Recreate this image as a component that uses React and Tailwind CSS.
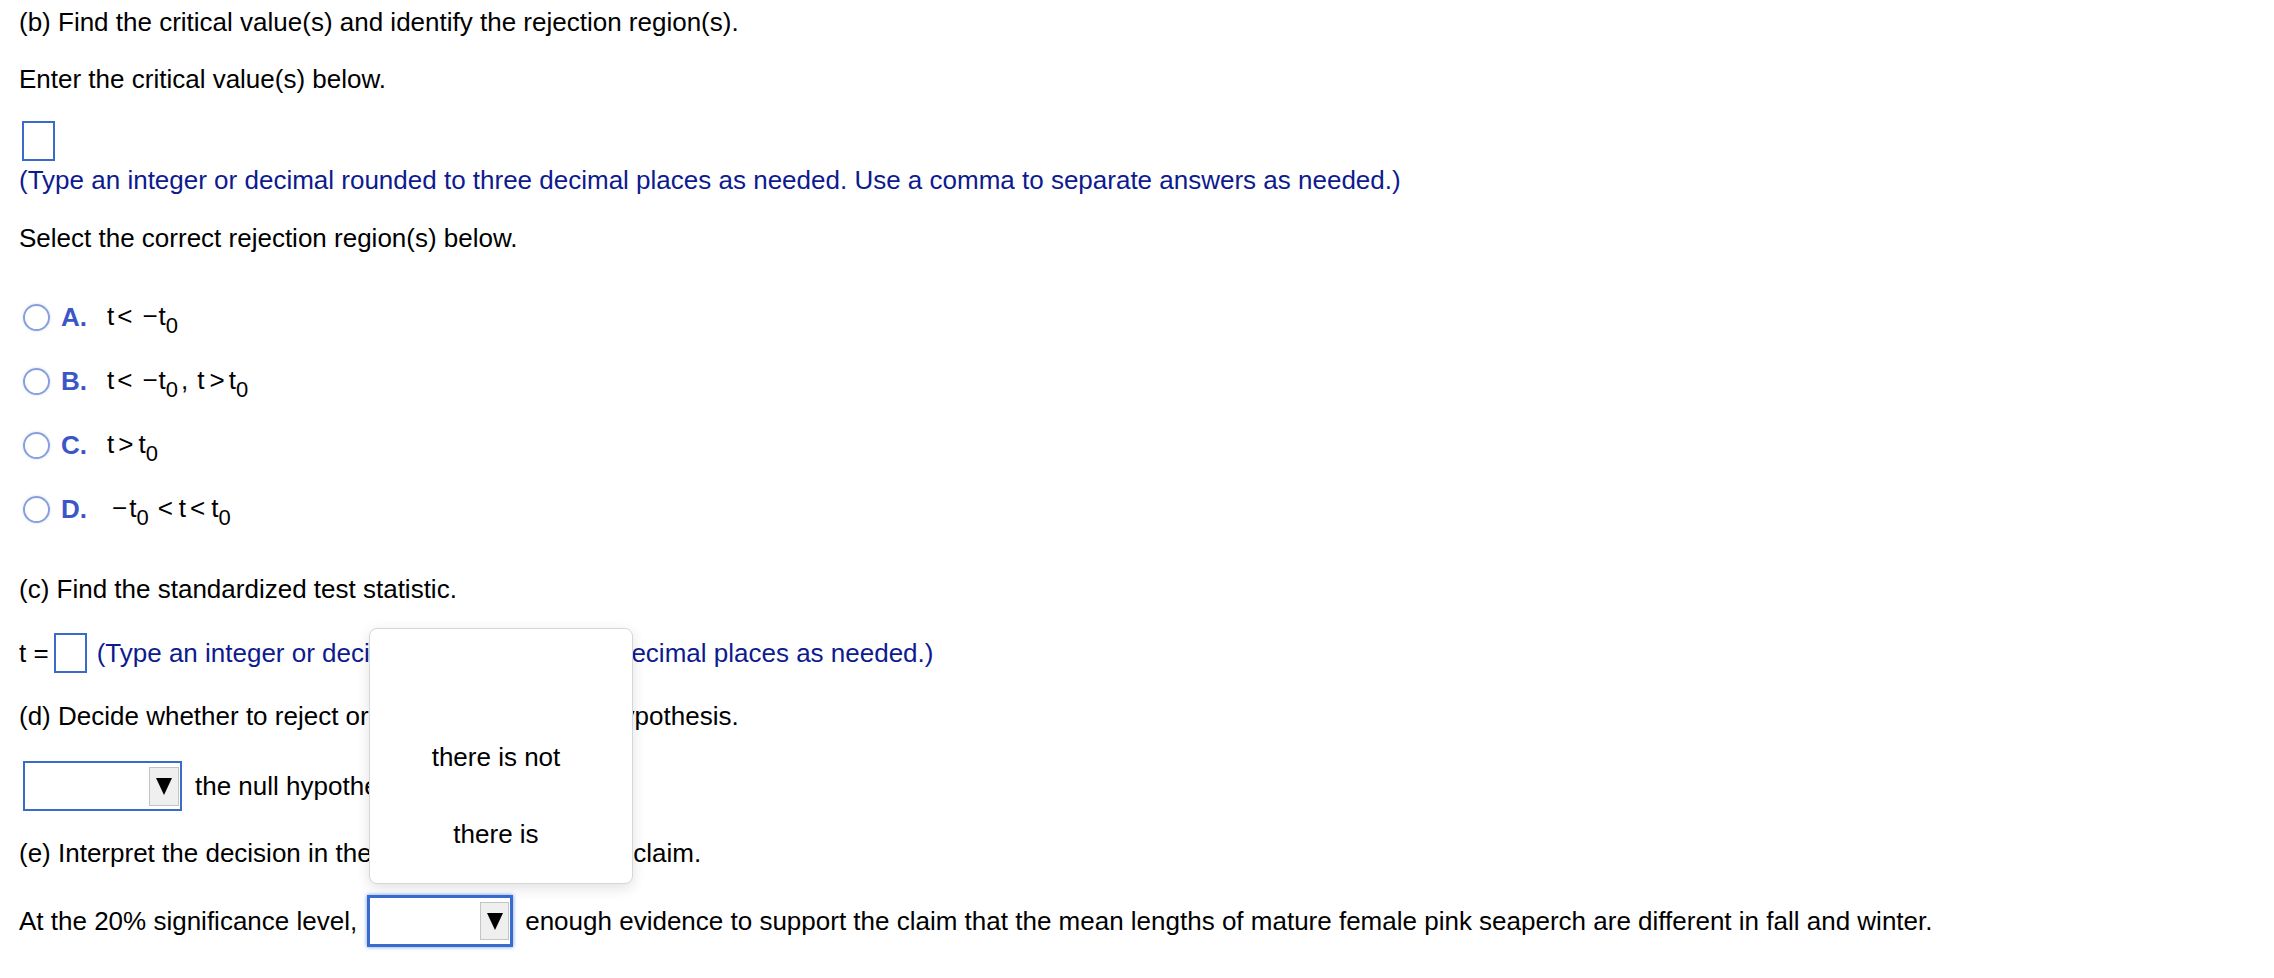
import React from 'react';

function Sub({ children }) {
  return <span className="relative top-[8px] text-[22px]">{children}</span>;
}

function Arrow({ className }) {
  return (
    <div className={className}>
      <svg width="16" height="17" viewBox="0 0 16 17">
        <polygon points="0,0 16,0 8,17" fill="#000" />
      </svg>
    </div>
  );
}

function Choice({ letter, first, children }) {
  return (
    <div className={`${first ? 'mt-[46px]' : 'mt-[28px]'} flex h-[36px] items-center`}>
      <span className="ml-[4px] h-[27px] w-[27px] rounded-full border-2 border-[#86a0dd] shadow-[0_0_3px_#cfdaf3]" />
      <span className="ml-[11px] w-[46px] font-bold text-[#3c56c8]">{letter}</span>
      <span className="flex items-baseline">{children}</span>
    </div>
  );
}

export default function App() {
  return (
    <div className="relative min-h-[978px] w-[2274px] bg-white pl-[19px] pt-[7px] font-['Liberation_Sans',Arial,sans-serif] text-[26px] leading-[30px] text-black">
      {/* part b */}
      <p>(b) Find the critical value(s) and identify the rejection region(s).</p>
      <p className="mt-[27px]">Enter the critical value(s) below.</p>
      <div className="ml-[3px] mt-[27px] h-[40px] w-[33px] border-2 border-[#3a6bc8]" />
      <p className="mt-[4px] text-[#0d1b8f]">
        (Type an integer or decimal rounded to three decimal places as needed. Use a comma to separate answers as needed.)
      </p>
      <p className="mt-[28px]">Select the correct rejection region(s) below.</p>

      <Choice letter="A." first>
        <span>t</span>
        <span className="ml-[3px]">&lt;</span>
        <span className="ml-[10px]">−</span>
        <span className="ml-[1px]">t</span>
        <Sub>0</Sub>
      </Choice>
      <Choice letter="B.">
        <span>t</span>
        <span className="ml-[3px]">&lt;</span>
        <span className="ml-[10px]">−</span>
        <span className="ml-[1px]">t</span>
        <Sub>0</Sub>
        <span className="ml-[3px]">,</span>
        <span className="ml-[9px]">t</span>
        <span className="ml-[5px]">&gt;</span>
        <span className="ml-[4px]">t</span>
        <Sub>0</Sub>
      </Choice>
      <Choice letter="C.">
        <span>t</span>
        <span className="ml-[4px]">&gt;</span>
        <span className="ml-[5px]">t</span>
        <Sub>0</Sub>
      </Choice>
      <Choice letter="D.">
        <span className="ml-[5px]">−</span>
        <span className="ml-[2px]">t</span>
        <Sub>0</Sub>
        <span className="ml-[9px]">&lt;</span>
        <span className="ml-[6px]">t</span>
        <span className="ml-[4px]">&lt;</span>
        <span className="ml-[6px]">t</span>
        <Sub>0</Sub>
      </Choice>

      {/* part c */}
      <p className="mt-[47px]">(c) Find the standardized test statistic.</p>
      <div className="mt-[29px] flex h-[40px] items-center">
        <span>t =</span>
        <div className="ml-[5px] h-[40px] w-[33px] border-2 border-[#3a6bc8]" />
        <span className="ml-[10px] text-[#0d1b8f]">
          (Type an integer or decimal rounded to three decimal places as needed.)
        </span>
      </div>

      {/* part d */}
      <p className="mt-[28px]">(d) Decide whether to reject or fail to reject the null hypothesis.</p>
      <div className="mt-[30px] flex h-[50px] items-center">
        <div className="ml-[4px] flex h-[50px] w-[159px] items-center justify-end border-2 border-[#3a6bc8] bg-white pr-[1px]">
          <Arrow className="flex h-[39px] w-[30px] items-center justify-center border border-[#c4c4c4] bg-[#efefef]" />
        </div>
        <span className="ml-[13px]">the null hypothesis.</span>
      </div>

      {/* part e */}
      <p className="mt-[27px]">(e) Interpret the decision in the context of the original claim.</p>
      <div className="mt-[27px] flex h-[52px] items-center">
        <span>At the 20% significance level,</span>
        <div className="ml-[10px] flex h-[52px] w-[146px] items-center justify-end border-[3px] border-[#3a6bd0] bg-white pr-[1px] shadow-[0_0_4px_#6f97e0]">
          <Arrow className="flex h-[38px] w-[29px] items-center justify-center border border-[#c4c4c4] bg-[#efefef]" />
        </div>
        <span className="ml-[12px]">
          enough evidence to support the claim that the mean lengths of mature female pink seaperch are different in fall and winter.
        </span>
      </div>

      {/* open dropdown menu */}
      <div className="absolute left-[369px] top-[628px] h-[256px] w-[264px] rounded-[8px] border border-[#d6d6d6] bg-white pr-[10px] pt-[89px] shadow-[0_4px_14px_rgba(0,0,0,0.12)]">
        <div className="flex h-[77px] items-center justify-center">there is not</div>
        <div className="flex h-[77px] items-center justify-center">there is</div>
      </div>
    </div>
  );
}
